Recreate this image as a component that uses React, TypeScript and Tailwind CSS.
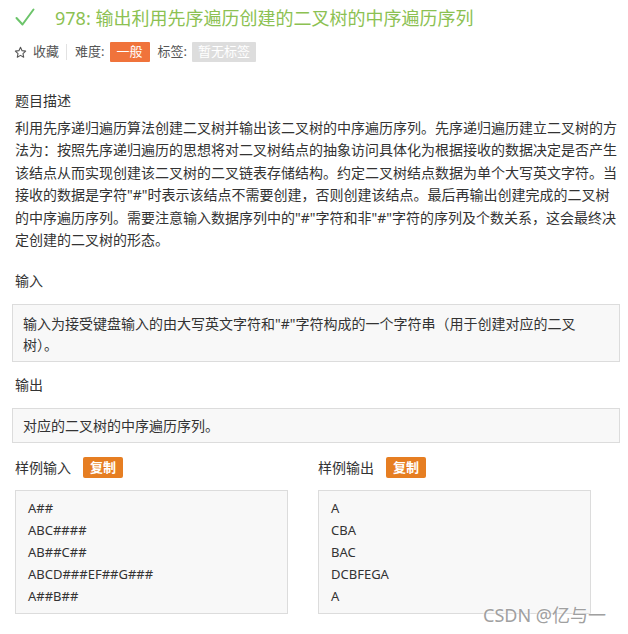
const font = { fontFamily: '"Noto Sans", "Noto Sans CJK SC", sans-serif' };

const descLines = [
  "利用先序递归遍历算法创建二叉树并输出该二叉树的中序遍历序列。先序递归遍历建立二叉树的方",
  "法为：按照先序递归遍历的思想将对二叉树结点的抽象访问具体化为根据接收的数据决定是否产生",
  "该结点从而实现创建该二叉树的二叉链表存储结构。约定二叉树结点数据为单个大写英文字符。当",
  '接收的数据是字符"#"时表示该结点不需要创建，否则创建该结点。最后再输出创建完成的二叉树',
  '的中序遍历序列。需要注意输入数据序列中的"#"字符和非"#"字符的序列及个数关系，这会最终决',
  "定创建的二叉树的形态。",
];

const sampleIn = ["A##", "ABC####", "AB##C##", "ABCD###EF##G###", "A##B##"];
const sampleOut = ["A", "CBA", "BAC", "DCBFEGA", "A"];

function Sample({ label, lines }: { label: string; lines: string[] }) {
  return (
    <div className="flex flex-col w-[273px]">
      <div className="flex items-center h-[22px]">
        <span className="text-[14px] text-[#333]">{label}</span>
        <span className="ml-[12px] h-[21px] w-[40px] flex items-center justify-center rounded-[2px] bg-[#e67e22] text-white text-[13px] font-semibold">
          复制
        </span>
      </div>
      <div className="mt-[12px] border border-[#dcdcdc] bg-[#f8f8f8] pl-[12px] pt-[6px] pb-[7px] h-[124px]">
        {lines.map((l, i) => (
          <div key={i} className="text-[13px] leading-[22px] text-[#333]">
            {l}
          </div>
        ))}
      </div>
    </div>
  );
}

export default function App() {
  return (
    <div className="relative w-[628px] h-[634px] bg-white overflow-hidden" style={font}>
      <div className="flex items-center pl-[15px] pt-[5px] h-[30px]">
        <svg width="20" height="19" viewBox="0 0 20 19" fill="none">
          <path d="M1.5 10 L7.5 16.5 L18.5 1.5" stroke="#6cc46a" strokeWidth="2" strokeLinecap="round" strokeLinejoin="round" />
        </svg>
        <span className="ml-[20px] text-[18px] text-[#8cc152] leading-[24px]">
          978: 输出利用先序遍历创建的二叉树的中序遍历序列
        </span>
      </div>

      <div className="flex items-center pl-[14px] mt-[12px] h-[20px] text-[13px] text-[#555]">
        <svg width="13" height="13" viewBox="0 0 24 24" fill="none" stroke="#555" strokeWidth="2" strokeLinejoin="round">
          <path d="M12 2.5 L14.9 8.6 L21.5 9.4 L16.6 14 L17.9 20.6 L12 17.3 L6.1 20.6 L7.4 14 L2.5 9.4 L9.1 8.6 Z" />
        </svg>
        <span className="ml-[6px]">收藏</span>
        <span className="ml-[7px] h-[16px] w-px bg-[#e2e2e2]"></span>
        <span className="ml-[8px]">难度:</span>
        <span className="ml-[5px] h-[20px] w-[40px] flex items-center justify-center bg-[#f0733b] text-white text-[13px] rounded-[1px]">
          一般
        </span>
        <span className="ml-[8px]">标签:</span>
        <span className="ml-[5px] h-[20px] w-[64px] flex items-center justify-center bg-[#dddddd] text-white text-[13px] rounded-[1px]">
          暂无标签
        </span>
      </div>

      <div className="pl-[15px] mt-[28px] text-[14px] text-[#333] leading-[22px]">题目描述</div>
      <div className="pl-[15px] mt-[5px] text-[14px] text-[#333] leading-[22.4px] whitespace-nowrap">
        {descLines.map((l, i) => (
          <div key={i}>{l}</div>
        ))}
      </div>

      <div className="pl-[15px] mt-[19px] text-[14px] text-[#333] leading-[22px]">输入</div>
      <div className="ml-[12px] mr-[8px] mt-[12px] border border-[#dcdcdc] bg-[#f8f8f8] pl-[10px] pt-[8px] pb-[6px] text-[14px] text-[#333] leading-[21px]">
        输入为接受键盘输入的由大写英文字符和"#"字符构成的一个字符串（用于创建对应的二叉
        <br />
        树）。
      </div>

      <div className="pl-[15px] mt-[12px] text-[14px] text-[#333] leading-[22px]">输出</div>
      <div className="ml-[12px] mr-[8px] mt-[12px] border border-[#dcdcdc] bg-[#f8f8f8] pl-[10px] pt-[6px] pb-[6px] text-[14px] text-[#333] leading-[21px]">
        对应的二叉树的中序遍历序列。
      </div>

      <div className="flex gap-[30px] pl-[15px] mt-[13px]">
        <Sample label="样例输入" lines={sampleIn} />
        <Sample label="样例输出" lines={sampleOut} />
      </div>

      <div
        className="absolute left-[483px] top-[603px] text-[18px] text-[#a0a0a0] leading-[24px]"
        style={{ textShadow: "0 0 2px #fff, 0 0 2px #fff" }}
      >
        CSDN @亿与一
      </div>
    </div>
  );
}
